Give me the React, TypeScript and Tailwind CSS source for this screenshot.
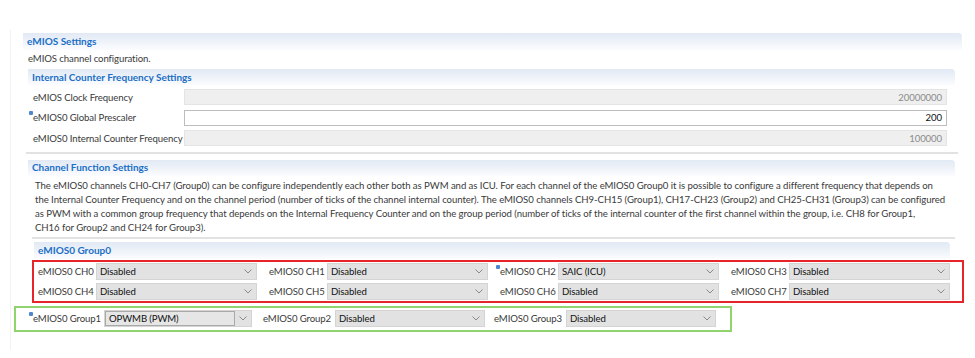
import React from "react";

function Chevron() {
  return (
    <svg width="8" height="5" viewBox="0 0 8 5">
      <path d="M0.5 0.5 L4 4 L7.5 0.5" fill="none" stroke="#8a8a8a" strokeWidth="1" />
    </svg>
  );
}

function Marker() {
  return <span className="absolute -left-[4px] top-[1px] w-[4px] h-[4px] rounded-[1px] bg-[#4f86cf]" />;
}

function Select({ value, w, focus }: { value: string; w: string; focus?: boolean }) {
  return (
    <div className={`flex items-center h-[17px] bg-[#e2e2e2] border border-[#d4d4d4] ${w}`}>
      {focus ? (
        <span className="flex-1 h-full flex items-center pl-[3px] border border-[#a9a9a9] bg-[#e6e6e6] text-[#111]">{value}</span>
      ) : (
        <span className="flex-1 pl-[3px] text-[#111]">{value}</span>
      )}
      <span className="w-[16px] flex justify-center">
        <Chevron />
      </span>
    </div>
  );
}

function Label({ text, w, marker }: { text: string; w: string; marker?: boolean }) {
  return (
    <span className={`relative shrink-0 whitespace-nowrap text-[#3a3a3a] ${w}`}>
      {marker && <Marker />}
      {text}
    </span>
  );
}

function Header({ text, h }: { text: string; h: string }) {
  return (
    <div className={`${h} flex items-center pl-[4px] rounded-tr-[4px] bg-gradient-to-b from-[#e1e9f4] to-[#fbfcfe] text-[#1b6fc6] font-bold text-[10px] tracking-normal`}>
      {text}
    </div>
  );
}

function Field({ label, value, editable, marker }: { label: string; value: string; editable?: boolean; marker?: boolean }) {
  return (
    <div className="h-[20.5px] flex items-center pl-[5px] pr-[8px]">
      <span className="relative w-[151px] shrink-0 whitespace-nowrap text-[#3a3a3a]">
        {marker && <Marker />}
        {label}
      </span>
      <div
        className={`flex-1 h-[16px] flex items-center justify-end pr-[4px] ${
          editable ? "bg-white border border-[#bdbdbd] text-[#111]" : "bg-[#efefef] border border-[#e4e4e4] text-[#8c8c8c]"
        }`}
      >
        {value}
      </div>
    </div>
  );
}

const paragraph = [
  "The eMIOS0 channels CH0-CH7 (Group0) can be configure independently each other both as PWM and as ICU. For each channel of the eMIOS0 Group0 it is possible to configure a different frequency that depends on",
  "the Internal Counter Frequency and on the channel period (number of ticks of the channel internal counter). The eMIOS0 channels CH9-CH15 (Group1), CH17-CH23 (Group2) and CH25-CH31 (Group3) can be configured",
  "as PWM with a common group frequency that depends on the Internal Frequency Counter and on the group period (number of ticks of the internal counter of the first channel within the group, i.e. CH8 for Group1,",
  "CH16 for Group2 and CH24 for Group3).",
];

export default function App() {
  const ch = [
    ["eMIOS0 CH0", "Disabled", false],
    ["eMIOS0 CH1", "Disabled", false],
    ["eMIOS0 CH2", "SAIC (ICU)", true],
    ["eMIOS0 CH3", "Disabled", false],
    ["eMIOS0 CH4", "Disabled", false],
    ["eMIOS0 CH5", "Disabled", false],
    ["eMIOS0 CH6", "Disabled", false],
    ["eMIOS0 CH7", "Disabled", false],
  ] as const;

  return (
    <div className="w-[975px] h-[358px] bg-white overflow-hidden font-['Lato','Liberation_Sans',sans-serif] text-[9.6px] tracking-[-0.1px] leading-[15px]">
      <div className="pt-[30px] pl-[10px]">
        <div className="border-l border-[#f2f2f2] pl-[12px] pt-[3px] h-[320px]">
          <div className="w-[939px]">
            <Header text="eMIOS Settings" h="h-[17px]" />
            <div className="h-[17px] flex items-center pl-[5px] text-[#3a3a3a]">eMIOS channel configuration.</div>
            <div className="ml-[5px] w-[927px] mt-[2px]">
              <Header text="Internal Counter Frequency Settings" h="h-[16px]" />
              <div className="mt-[2px]">
                <Field label="eMIOS Clock Frequency" value="20000000" />
                <Field label="eMIOS0 Global Prescaler" value="200" editable marker />
                <Field label="eMIOS0 Internal Counter Frequency" value="100000" />
              </div>
            </div>
            <div className="ml-[3px] w-[932px] h-[2px] bg-[#e2e2e2] mt-[3px]" />
            <div className="ml-[5px] w-[927px] mt-[6px]">
              <Header text="Channel Function Settings" h="h-[16px]" />
              <div className="mt-[3px] pl-[7px] text-[#3a3a3a] leading-[14px] tracking-[-0.06px]">
                {paragraph.map((line) => (
                  <div key={line} className="whitespace-nowrap">{line}</div>
                ))}
              </div>
              <div className="ml-[4px] h-[2px] bg-[#e2e2e2] mt-[2px]" />
              <div className="ml-[6px] w-[916px] mt-[3px]">
                <Header text="eMIOS0 Group0" h="h-[17px]" />
              </div>
              <div className="ml-[4px] w-[932px] mt-[1px] border-2 border-[#e8242b] pl-[4px] pt-[1px] pb-[1px] grid grid-cols-4 gap-y-[3px]">
                {ch.map(([l, v, m]) => (
                  <div key={l} className="flex items-center h-[17px]">
                    <Label text={l} w="w-[58px]" marker={m} />
                    <Select value={v} w="w-[161px]" />
                  </div>
                ))}
              </div>
            </div>
            <div className="-ml-[9px] w-[718px] mt-[3px] h-[26px] border-2 border-[#8fd46f] pl-[17px] flex items-center">
              <Label text="eMIOS0 Group1" w="w-[71px]" marker />
              <Select value="OPWMB (PWM)" w="w-[148px]" focus />
              <span className="w-[11px]" />
              <Label text="eMIOS0 Group2" w="w-[72px]" />
              <Select value="Disabled" w="w-[150px]" />
              <span className="w-[9px]" />
              <Label text="eMIOS0 Group3" w="w-[72px]" />
              <Select value="Disabled" w="w-[150px]" />
            </div>
          </div>
        </div>
      </div>
    </div>
  );
}
